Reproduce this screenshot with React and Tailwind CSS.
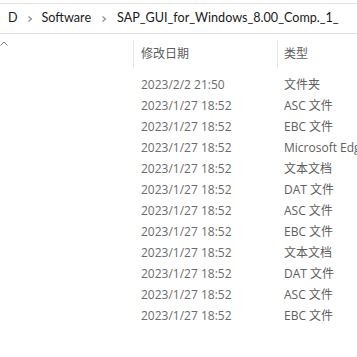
const rows = [
  { date: "2023/2/2 21:50", type: "文件夹" },
  { date: "2023/1/27 18:52", type: "ASC 文件" },
  { date: "2023/1/27 18:52", type: "EBC 文件" },
  { date: "2023/1/27 18:52", type: "Microsoft Edge HTML Document" },
  { date: "2023/1/27 18:52", type: "文本文档" },
  { date: "2023/1/27 18:52", type: "DAT 文件" },
  { date: "2023/1/27 18:52", type: "ASC 文件" },
  { date: "2023/1/27 18:52", type: "EBC 文件" },
  { date: "2023/1/27 18:52", type: "文本文档" },
  { date: "2023/1/27 18:52", type: "DAT 文件" },
  { date: "2023/1/27 18:52", type: "ASC 文件" },
  { date: "2023/1/27 18:52", type: "EBC 文件" },
];

const Chevron = () => (
  <svg width="6" height="8" viewBox="0 0 6 8" className="shrink-0">
    <path d="M1.5 1.5 L4.5 4 L1.5 6.5" fill="none" stroke="#8a8a8a" strokeWidth="1.1" />
  </svg>
);

export default function App() {
  return (
    <div
      className="w-[357px] h-[357px] overflow-hidden bg-white"
      style={{ fontFamily: '"Open Sans", "Noto Sans CJK SC", sans-serif' }}
    >
      {/* breadcrumb */}
      <div
        className="mt-[3px] flex h-[31px] items-center whitespace-nowrap border-y border-[#e3e3e3] pl-[8px] text-[12.6px] text-[#1a1a1a]"
        style={{ fontFamily: 'Lato, "Noto Sans CJK SC", sans-serif' }}
      >
        <span>D</span>
        <span className="ml-[9px] mr-[9px]">
          <Chevron />
        </span>
        <span>Software</span>
        <span className="ml-[10px] mr-[10px]">
          <Chevron />
        </span>
        <span>SAP_GUI_for_Windows_8.00_Comp._1_</span>
      </div>

      {/* column headers */}
      <div className="grid grid-cols-[133px_144px_1fr] pt-[6px] text-[12px] text-[#5c5c5c]">
        <div className="relative h-[28px]">
          <svg width="8" height="5" viewBox="0 0 8 5" className="absolute left-0 top-[1px]">
            <path d="M0.5 4.5 L4 1 L7.5 4.5" fill="none" stroke="#7a7a7a" strokeWidth="1" />
          </svg>
        </div>
        <div className="flex h-[28px] items-center border-l border-[#e5e5e5] pl-[7px]">修改日期</div>
        <div className="flex h-[28px] items-center border-l border-[#e5e5e5] pl-[6px]">类型</div>
      </div>

      {/* rows */}
      <div className="mt-[6px] text-[12px]">
        {rows.map((row, i) => (
          <div key={i} className="grid h-[21px] grid-cols-[133px_144px_1fr] items-center whitespace-nowrap">
            <div />
            <div className="pl-[8px] text-[#6b6b6b]">{row.date}</div>
            <div className="overflow-hidden pl-[7px] text-[#5e5e5e]">{row.type}</div>
          </div>
        ))}
      </div>
    </div>
  );
}
